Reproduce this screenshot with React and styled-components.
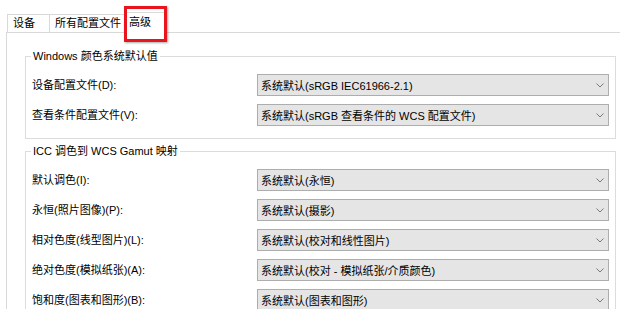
import React from "react";
import styled, { createGlobalStyle } from "styled-components";

const GlobalStyle = createGlobalStyle`
  html, body {
    margin: 0;
    padding: 0;
    background: #fff;
    overflow: hidden;
  }
  body {
    font-family: "Liberation Sans", "Noto Sans CJK SC", sans-serif;
    font-size: 11px;
    color: #000;
  }
`;

const Page = styled.div`
  width: 640px;
  height: 309px;
  overflow: hidden;
`;

const TabStrip = styled.div`
  display: flex;
  align-items: flex-end;
  height: 32px;
  padding-left: 7px;
`;

const Tab = styled.div`
  position: relative;
  box-sizing: border-box;
  min-width: ${(p) => (p.$active ? "42px" : "43px")};
  height: ${(p) => (p.$active ? "21px" : "18px")};
  margin-left: -1px;
  margin-bottom: ${(p) => (p.$active ? "-1px" : "0")};
  padding: 0 3px 0 ${(p) => (p.$active ? "4px" : "5px")};
  border: 1px solid #d9d9d9;
  border-bottom: none;
  background: #fff;
  line-height: ${(p) => (p.$active ? "18px" : "17px")};
  white-space: nowrap;
  z-index: ${(p) => (p.$active ? 1 : 0)};

  &:first-child {
    margin-left: 0;
  }
`;

const Highlight = styled.div`
  position: absolute;
  left: -1px;
  top: -7px;
  width: 43px;
  height: 36px;
  box-sizing: border-box;
  border: 3px solid #e8141e;
  box-shadow: 1px 1px 2px rgba(0, 0, 0, 0.35);
  pointer-events: none;
`;

const Panel = styled.div`
  width: 591px;
  margin-left: 6px;
  padding: 15px 18px 20px;
  border: 1px solid #d9d9d9;
  background: #fff;
`;

const Group = styled.fieldset`
  margin: 0 0 ${(p) => (p.$last ? "0" : "4px")};
  padding: 10px 6px 12px 6px;
  border: 1px solid #dcdcdc;
  min-width: 0;
`;

const Legend = styled.legend`
  padding: 0 2px;
  margin-left: -1px;
  line-height: 16px;
`;

const Rows = styled.div`
  display: grid;
  grid-template-columns: 225px 1fr;
  row-gap: 8px;
  align-items: center;
`;

const Label = styled.div`
  line-height: 16px;
  white-space: nowrap;
`;

const Combo = styled.div`
  display: flex;
  align-items: center;
  justify-content: space-between;
  box-sizing: border-box;
  height: 22px;
  padding: 0 4px 0 3px;
  border: 1px solid #adadad;
  background: #e5e5e5;
  white-space: nowrap;
`;

const Chevron = () => (
  <svg width="8" height="5" viewBox="0 0 8 5">
    <path d="M0.5 0.5 L4 4 L7.5 0.5" fill="none" stroke="#7a7a7a" strokeWidth="1" />
  </svg>
);

const GROUPS = [
  {
    title: "Windows 颜色系统默认值",
    rows: [
      ["设备配置文件(D):", "系统默认(sRGB IEC61966-2.1)"],
      ["查看条件配置文件(V):", "系统默认(sRGB 查看条件的 WCS 配置文件)"],
    ],
  },
  {
    title: "ICC 调色到 WCS Gamut 映射",
    rows: [
      ["默认调色(I):", "系统默认(永恒)"],
      ["永恒(照片图像)(P):", "系统默认(摄影)"],
      ["相对色度(线型图片)(L):", "系统默认(校对和线性图片)"],
      ["绝对色度(模拟纸张)(A):", "系统默认(校对 - 模拟纸张/介质颜色)"],
      ["饱和度(图表和图形)(B):", "系统默认(图表和图形)"],
    ],
  },
];

export default function App() {
  return (
    <Page>
      <GlobalStyle />
      <TabStrip>
        <Tab>设备</Tab>
        <Tab>所有配置文件</Tab>
        <Tab $active>
          高级
          <Highlight />
        </Tab>
      </TabStrip>
      <Panel>
        {GROUPS.map((g, gi) => (
          <Group key={g.title} $last={gi === GROUPS.length - 1}>
            <Legend>{g.title}</Legend>
            <Rows>
              {g.rows.map(([label, value]) => (
                <React.Fragment key={label}>
                  <Label>{label}</Label>
                  <Combo>
                    <span>{value}</span>
                    <Chevron />
                  </Combo>
                </React.Fragment>
              ))}
            </Rows>
          </Group>
        ))}
      </Panel>
    </Page>
  );
}
